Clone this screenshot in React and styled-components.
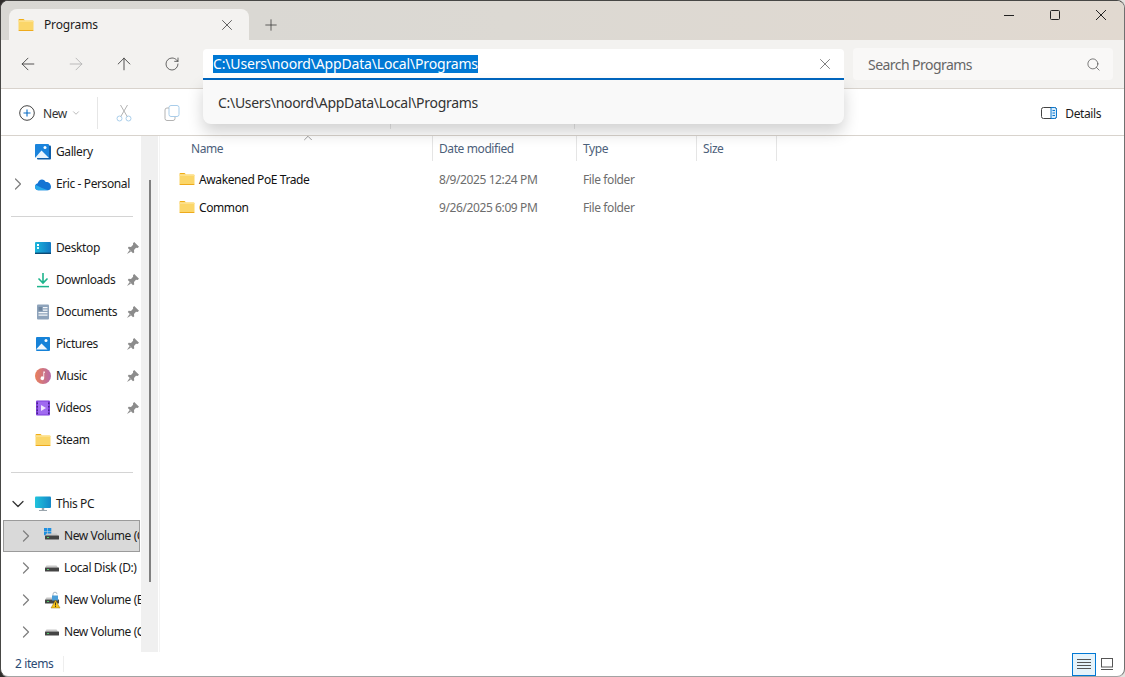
import React from 'react';
import styled, { createGlobalStyle } from 'styled-components';
import {
  ArrowLeft,
  ArrowRight,
  ArrowUp,
  RotateCw,
  X,
  Plus,
  Search,
  ChevronDown,
  ChevronRight,
  ChevronUp,
} from 'lucide-react';

const GlobalStyle = createGlobalStyle`
  html, body {
    margin: 0;
    padding: 0;
    height: 100%;
    background: linear-gradient(90deg, #2e2c2a 50%, #e4e2df 50%);
    overflow: hidden;
  }
  * {
    box-sizing: border-box;
  }
`;

const Win = styled.div`
  width: 1125px;
  height: 677px;
  display: flex;
  flex-direction: column;
  border: 1px solid #474745;
  border-right-color: #707070;
  border-bottom-color: #a3a3a3;
  border-radius: 8px;
  overflow: hidden;
  background: #fff;
  font-family: 'Noto Sans', 'Open Sans', sans-serif;
  font-size: 12px;
  letter-spacing: -0.4px;
  color: #1b1b1b;
`;

const TitleBar = styled.div`
  height: 39px;
  flex: none;
  display: flex;
  align-items: flex-end;
  padding-left: 8px;
  background: linear-gradient(90deg, #d8d7d3 0%, #dcd9d3 45%, #e1d9d0 100%);
`;

const Tab = styled.div`
  width: 240px;
  height: 31px;
  display: flex;
  align-items: center;
  padding: 0 13px 0 9px;
  background: #f3f2f0;
  border-radius: 8px 8px 0 0;
`;

const TabTitle = styled.span`
  margin-left: 10px;
  flex: 1;
  letter-spacing: -0.15px;
`;

const NewTab = styled.div`
  width: 44px;
  height: 31px;
  display: flex;
  align-items: center;
  justify-content: center;
  color: #333;
`;

const WinControls = styled.div`
  margin-left: auto;
  align-self: stretch;
  display: flex;
  padding: 0 13px 0 0;
  gap: 26px;
`;

const WinButton = styled.div`
  width: 20px;
  height: 28px;
  display: flex;
  align-items: center;
  justify-content: center;
`;

const NavBar = styled.div`
  height: 49px;
  flex: none;
  display: flex;
  align-items: center;
  padding: 0 11px 1px 3px;
  background: #f3f2f0;
  border-bottom: 1px solid #d8d3cd;
`;

const NavButton = styled.div`
  width: 48px;
  height: 32px;
  display: flex;
  align-items: center;
  justify-content: center;
  color: ${(p) => (p.$off ? '#b0b0b0' : '#333')};
`;

const AddressWrap = styled.div`
  position: relative;
  width: 641px;
  height: 31px;
  margin: 2px 0 0 7px;
`;

const AddressBox = styled.div`
  height: 31px;
  display: flex;
  align-items: center;
  justify-content: space-between;
  padding: 0 10px;
  background: #fff;
  border-radius: 4px 4px 0 0;
  border-bottom: 2px solid #0067c0;
  font-size: 14px;
`;

const AddressText = styled.span`
  background: #0078d4;
  color: #fff;
  line-height: 18px;
  letter-spacing: -0.165px;
`;

const Popup = styled.div`
  position: absolute;
  z-index: 10;
  top: 31px;
  left: 0;
  right: 0;
  height: 44px;
  display: flex;
  align-items: center;
  padding-left: 15px;
  background: #f9f9f9;
  border-radius: 0 0 8px 8px;
  box-shadow: 0 8px 16px rgba(0, 0, 0, 0.18);
  font-size: 14px;
  letter-spacing: -0.3px;
  color: #333;
`;

const SearchBox = styled.div`
  width: 260px;
  height: 32px;
  margin: 1px 0 0 9px;
  display: flex;
  align-items: center;
  justify-content: space-between;
  padding: 0 12px 0 15px;
  background: #f9f8f7;
  border-radius: 4px;
  font-size: 14px;
  letter-spacing: -0.55px;
  color: #666;
`;

const CommandBar = styled.div`
  height: 47px;
  flex: none;
  display: flex;
  align-items: center;
  padding: 2px 23px 0 0;
  background: #fff;
  border-bottom: 1px solid #d8d3cd;
`;

const CmdNew = styled.div`
  width: 96px;
  display: flex;
  align-items: center;
  padding-left: 18px;
  gap: 8px;
  color: #333;
`;

const NewChevron = styled(ChevronDown)`
  margin-left: -4px;
`;

const CmdDivider = styled.div`
  width: 1px;
  height: 32px;
  background: #e6e6e6;
  margin-left: ${(p) => p.$left || 0}px;
  margin-right: ${(p) => p.$right || 0}px;
`;

const CmdIcon = styled.div`
  width: 48px;
  height: 32px;
  display: flex;
  align-items: center;
  justify-content: center;
`;

const CmdDetails = styled.div`
  margin-left: auto;
  display: flex;
  align-items: center;
  gap: 8px;
`;

const Main = styled.div`
  flex: 1;
  min-height: 0;
  display: flex;
`;

const Sidebar = styled.div`
  width: 140px;
  flex: none;
  overflow: hidden;
  display: flex;
  flex-direction: column;
`;

const NavRow = styled.div`
  height: 32px;
  flex: none;
  display: flex;
  align-items: center;
  white-space: nowrap;
  overflow: hidden;
  padding-left: ${(p) => (p.$child ? 20 : 12)}px;
  ${(p) =>
    p.$selected &&
    `
    margin: 0 1px 0 2px;
    padding-left: 17px;
    background: #d9d9d9;
    border: 1px solid #9b9b9b;
  `}
`;

const Chev = styled.div`
  width: 9px;
  height: 12px;
  margin-right: 13px;
  display: flex;
  align-items: center;
  justify-content: center;
  flex: none;
  color: ${(p) => (p.$dark ? '#333' : '#808080')};
  svg {
    flex: none;
  }
`;

const NavIcon = styled.div`
  width: 16px;
  height: 16px;
  flex: none;
  display: flex;
  align-items: center;
  justify-content: center;
`;

const NavLabel = styled.span`
  margin-left: 5px;
  padding-bottom: 2px;
  flex: 1;
`;

const PinWrap = styled.div`
  width: 12px;
  flex: none;
  margin-right: 2px;
  display: flex;
`;

const SideDivider = styled.div`
  height: 32px;
  flex: none;
  display: flex;
  align-items: center;
  padding: 0 8px 0 10px;
  &::after {
    content: '';
    flex: 1;
    height: 1px;
    background: #d4d4d4;
  }
`;

const ScrollTrack = styled.div`
  width: 17px;
  flex: none;
  display: flex;
  justify-content: center;
  padding-top: 44px;
  background: #f0f0f0;
`;

const ScrollThumb = styled.div`
  width: 2px;
  height: 402px;
  background: #808080;
`;

const Content = styled.div`
  flex: 1;
  margin-left: 1px;
  border-left: 1px solid #f4f4f4;
  display: flex;
  flex-direction: column;
`;

const HeaderRow = styled.div`
  position: relative;
  height: 25px;
  display: flex;
  padding-left: 12px;
  margin-bottom: 4px;
`;

const SortCaret = styled.div`
  position: absolute;
  left: 141px;
  top: -5px;
  color: #777;
  display: flex;
`;

const HeaderCell = styled.div`
  width: ${(p) => p.$w}px;
  height: 25px;
  display: flex;
  align-items: center;
  padding-left: ${(p) => p.$pad || 6}px;
  padding-bottom: 1px;
  border-right: 1px solid #e5e5e5;
  color: #4c607a;
`;

const FileRow = styled.div`
  height: 28px;
  display: flex;
  align-items: center;
  padding-left: 19px;
`;

const FileName = styled.div`
  width: 260px;
  display: flex;
  align-items: center;
  gap: 4px;
  color: #111;
`;

const FileCell = styled.div`
  width: ${(p) => p.$w}px;
  color: #6d6d6d;
`;

const StatusBar = styled.div`
  height: 24px;
  flex: none;
  display: flex;
  align-items: center;
  padding: 0 9px 0 14px;
  color: #2c4a73;
`;

const StatusText = styled.span`
  padding-bottom: 2px;
`;

const StatusDivider = styled.div`
  width: 1px;
  height: 16px;
  margin-left: 10px;
  background: #eee;
`;

const ViewButtons = styled.div`
  margin-left: auto;
  display: flex;
  align-items: center;
  gap: 3px;
`;

const ViewButton = styled.div`
  width: ${(p) => (p.$active ? 24 : 16)}px;
  height: 23px;
  display: flex;
  align-items: center;
  justify-content: center;
  border: ${(p) => (p.$active ? '1px solid #0078d4' : 'none')};
  background: ${(p) => (p.$active ? '#e5f3fb' : 'transparent')};
`;

const Folder = ({ size = 16 }) => (
  <svg width={size} height={size} viewBox="0 0 16 16">
    <path d="M0.5 3a1 1 0 0 1 1-1h4l1.6 1.4H0.5z" fill="#f0ad14" />
    <path d="M0.5 3.4h14a1 1 0 0 1 1 1v8.6a1 1 0 0 1-1 1h-13a1 1 0 0 1-1-1z" fill="#fbd669" />
    <path d="M0.5 13h15a1 1 0 0 1-1 1h-13a1 1 0 0 1-1-1z" fill="#eeaa1c" />
    <path d="M0.5 3.4h14a1 1 0 0 1 1 1v0.5h-15z" fill="#fde08a" />
  </svg>
);

const Cut = () => (
  <svg width="16" height="18" viewBox="0 0 16 18" fill="none" stroke="#a9cdea" strokeWidth="1">
    <circle cx="3.5" cy="14.5" r="2.5" />
    <circle cx="12.5" cy="14.5" r="2.5" />
    <path d="M4.8 12.5 11.5 1M11.2 12.5 4.5 1" stroke="#b3b3b3" />
  </svg>
);

const CopyIcon = () => (
  <svg width="16" height="16" viewBox="0 0 16 16" fill="none">
    <rect x="5" y="0.5" width="10" height="11" rx="2" stroke="#a9cdea" />
    <path d="M5 3H3a2 2 0 0 0-2 2v8.5a2 2 0 0 0 2 2h6a2 2 0 0 0 2-2V12" stroke="#b3b3b3" />
  </svg>
);

const NewIcon = () => (
  <svg width="16" height="16" viewBox="0 0 16 16" fill="none">
    <circle cx="8" cy="8" r="7.3" stroke="#444" />
    <path d="M8 4.5v7M4.5 8h7" stroke="#0a6cc4" strokeWidth="1.1" />
  </svg>
);

const DetailsIcon = () => (
  <svg width="16" height="12" viewBox="0 0 16 12" fill="none">
    <rect x="0.5" y="0.5" width="15" height="11" rx="2" stroke="#444" />
    <path d="M10 0.5h3.5a2 2 0 0 1 2 2v7a2 2 0 0 1-2 2H10z" fill="#d9ecfb" stroke="#0a78d0" />
    <path d="M11.5 3.5h2.5M11.5 6h2.5M11.5 8.5h2.5" stroke="#0a78d0" />
  </svg>
);

const Pin = () => (
  <svg width="12" height="12" viewBox="0 0 12 12">
    <path d="M7.2 0 12 4.8 10.6 6 9 5.8 7 8l.2 2.4L6 11.2 0.8 6l.9-1.2L4 5l2.1-2.2L6 1.2z" fill="#8c8c8c" />
    <path d="M2.6 8 0 12l4-2.6z" fill="#8c8c8c" />
  </svg>
);

const GalleryIcon = () => (
  <svg width="16" height="16" viewBox="0 0 16 16">
    <rect x="2" y="1.5" width="14" height="14" rx="1" fill="#0f5ea8" />
    <rect x="0" y="0" width="14" height="14" rx="1" fill="#1b84dc" />
    <circle cx="10" cy="3.6" r="1.5" fill="#fff" />
    <path d="M0 14 6.5 6.5 14 14z" fill="#eaf5fd" />
  </svg>
);

const CloudIcon = () => (
  <svg width="16" height="16" viewBox="0 0 16 16">
    <g transform="translate(0 -1.5) scale(1 1.22)">
      <path d="M3.2 13C1.4 13 0 11.7 0 10.1c0-1.5 1.1-2.7 2.7-2.9C3.3 5.3 5 4 7 4c1.6 0 3 .8 3.7 2.1 2.7-.3 5.3 1.4 5.3 4 0 1.6-1.3 2.9-3 2.9z" fill="#1474d4" />
      <path d="M3.2 13C1.4 13 0 11.7 0 10.1c0-.6.2-1.1.5-1.6L7 11l6 2z" fill="#28a8ea" />
    </g>
  </svg>
);

const DesktopIcon = () => (
  <svg width="16" height="16" viewBox="0 0 16 16">
    <defs>
      <linearGradient id="dsk" x1="0" x2="1">
        <stop offset="0" stopColor="#1bb7dc" />
        <stop offset="1" stopColor="#1378c4" />
      </linearGradient>
    </defs>
    <rect x="0" y="2" width="16" height="12" rx="1" fill="url(#dsk)" />
    <rect x="2" y="4" width="2" height="2" fill="#fff" />
    <rect x="2" y="7" width="2" height="2" fill="#dff" />
    <rect x="0" y="12.6" width="16" height="1.4" fill="#0d4a75" />
  </svg>
);

const DownloadIcon = () => (
  <svg width="16" height="16" viewBox="0 0 16 16" fill="none" stroke="#1eb48c" strokeWidth="1.6">
    <path d="M8 1v9.5M3.5 6.5 8 11l4.5-4.5" />
    <path d="M2 14.6h12" strokeWidth="1.5" />
  </svg>
);

const DocIcon = () => (
  <svg width="16" height="16" viewBox="0 0 16 16">
    <rect x="2" y="0.5" width="12" height="15" rx="1" fill="#8ea3bb" />
    <path d="M8 3h4.5v1.2H8zM8 5.5h4.5v1.2H8zM3.5 8h9v1.2h-9zM3.5 10.5h9v1.2h-9z" fill="#f4f7fa" />
    <path d="M3.5 3H7v3.7H3.5z" fill="#6f86a0" />
  </svg>
);

const PicturesIcon = () => (
  <svg width="16" height="16" viewBox="0 0 16 16">
    <rect x="1" y="1" width="14" height="14" rx="1" fill="#1682d8" />
    <circle cx="11" cy="4.6" r="1.5" fill="#fff" />
    <path d="M1 13.4 6.5 7.5l6 5.9z" fill="#f2f8fd" />
  </svg>
);

const MusicIcon = () => (
  <svg width="16" height="16" viewBox="0 0 16 16">
    <defs>
      <linearGradient id="mus" x1="0" x2="1">
        <stop offset="0" stopColor="#e9805a" />
        <stop offset="1" stopColor="#b66aa8" />
      </linearGradient>
    </defs>
    <circle cx="8" cy="8" r="8" fill="url(#mus)" />
    <path d="M8.4 3.5h1.4v1.4H9.2v5.4a1.8 1.8 0 1 1-0.8-1.5z" fill="#fff" />
  </svg>
);

const VideoIcon = () => (
  <svg width="16" height="16" viewBox="0 0 16 16">
    <rect x="1" y="0.5" width="14" height="15" rx="1" fill="#7f3fdc" />
    <path d="M3 1.5v13h10v-13z" fill="#a06af0" />
    <path d="M6 5v6l5-3z" fill="#f0e8fd" />
    <path d="M1.7 2.5h1v1.4h-1zM1.7 6h1v1.4h-1zM1.7 9.5h1v1.4h-1zM1.7 12.5h1v1.4h-1zM13.3 2.5h1v1.4h-1zM13.3 6h1v1.4h-1zM13.3 9.5h1v1.4h-1zM13.3 12.5h1v1.4h-1z" fill="#321a60" />
  </svg>
);

const PcIcon = () => (
  <svg width="16" height="16" viewBox="0 0 16 16">
    <defs>
      <linearGradient id="pc" x1="0" x2="1">
        <stop offset="0" stopColor="#21c3dc" />
        <stop offset="1" stopColor="#1388c8" />
      </linearGradient>
    </defs>
    <rect x="0" y="0.5" width="16" height="11.5" rx="1" fill="url(#pc)" />
    <path d="M6.8 12h2.4v2H12v1H4v-1h2.8z" fill="#9aa5ad" />
  </svg>
);

const Drive = ({ system, warn }) => (
  <svg width="16" height="16" viewBox="0 0 16 16" style={{ overflow: 'visible' }}>
    {system && (
      <path d="M1 0h3.4v3.4H1zM4.9 0h3.4v3.4H4.9zM1 3.9h3.4v3.4H1zM4.9 3.9h3.4v3.4H4.9z" fill="#1e8fe0" />
    )}
    {warn && (
      <path d="M10 4V2.2a2 2 0 0 1 4 0" fill="none" stroke="#a9b8c4" strokeWidth="1" />
    )}
    <path d="M2 7.5 3.5 5.5h10L15 7.5z" fill="#c8c8c8" />
    <rect x="2" y="7.5" width="14" height="4" rx="0.5" fill="#444" />
    <rect x="4" y="9" width="2" height="1" fill="#4fd06a" />
    {warn && <rect x="9" y="3.5" width="6" height="5" fill="#4a9ed8" />}
    {warn && <path d="M12.5 8 17 16H8z" fill="#f7c31c" stroke="#7a5a00" strokeWidth="0.4" />}
    {warn && <path d="M12.1 10.5h.8v3h-.8zM12.1 14h.8v1h-.8z" fill="#222" />}
  </svg>
);

const Row = ({ icon, label, chev, open, child, selected, pin }) => (
  <NavRow $child={child} $selected={selected}>
    <Chev $dark={open}>
      {chev &&
        (open ? (
          <ChevronDown size={20} strokeWidth={1.5} />
        ) : (
          <ChevronRight size={20} strokeWidth={1.5} />
        ))}
    </Chev>
    <NavIcon>{icon}</NavIcon>
    <NavLabel>{label}</NavLabel>
    {pin && (
      <PinWrap>
        <Pin />
      </PinWrap>
    )}
  </NavRow>
);

const files = [
  { name: 'Awakened PoE Trade', date: '8/9/2025 12:24 PM' },
  { name: 'Common', date: '9/26/2025 6:09 PM' },
];

export default function App() {
  return (
    <>
      <GlobalStyle />
      <Win>
        <TitleBar>
          <Tab>
            <Folder />
            <TabTitle>Programs</TabTitle>
            <X size={18} strokeWidth={1} color="#333" />
          </Tab>
          <NewTab>
            <Plus size={18} strokeWidth={1} />
          </NewTab>
          <WinControls>
            <WinButton>
              <svg width="10" height="10" viewBox="0 0 10 10">
                <path d="M0 5.5h10" stroke="#222" />
              </svg>
            </WinButton>
            <WinButton>
              <svg width="10" height="10" viewBox="0 0 10 10" fill="none">
                <rect x="0.5" y="0.5" width="9" height="9" rx="1" stroke="#222" />
              </svg>
            </WinButton>
            <WinButton>
              <svg width="10" height="10" viewBox="0 0 10 10">
                <path d="M0 0l10 10M10 0 0 10" stroke="#222" />
              </svg>
            </WinButton>
          </WinControls>
        </TitleBar>

        <NavBar>
          <NavButton>
            <ArrowLeft size={20} strokeWidth={1} />
          </NavButton>
          <NavButton $off>
            <ArrowRight size={20} strokeWidth={1} />
          </NavButton>
          <NavButton>
            <ArrowUp size={20} strokeWidth={1} />
          </NavButton>
          <NavButton>
            <RotateCw size={16} strokeWidth={1.1} />
          </NavButton>
          <AddressWrap>
            <AddressBox>
              <AddressText>C:\Users\noord\AppData\Local\Programs</AddressText>
              <X size={18} strokeWidth={1} color="#555" />
            </AddressBox>
            <Popup>C:\Users\noord\AppData\Local\Programs</Popup>
          </AddressWrap>
          <SearchBox>
            Search Programs
            <Search size={15} strokeWidth={1.1} color="#444" />
          </SearchBox>
        </NavBar>

        <CommandBar>
          <CmdNew>
            <NewIcon />
            New
            <NewChevron size={10} strokeWidth={1.2} color="#777" />
          </CmdNew>
          <CmdDivider $right={2} />
          <CmdIcon>
            <Cut />
          </CmdIcon>
          <CmdIcon>
            <CopyIcon />
          </CmdIcon>
          <CmdDivider $left={194} />
          <CmdDivider $left={183} />
          <CmdDetails>
            <DetailsIcon />
            Details
          </CmdDetails>
        </CommandBar>

        <Main>
          <Sidebar>
            <Row icon={<GalleryIcon />} label="Gallery" />
            <Row icon={<CloudIcon />} label="Eric - Personal" chev />
            <SideDivider />
            <Row icon={<DesktopIcon />} label="Desktop" pin />
            <Row icon={<DownloadIcon />} label="Downloads" pin />
            <Row icon={<DocIcon />} label="Documents" pin />
            <Row icon={<PicturesIcon />} label="Pictures" pin />
            <Row icon={<MusicIcon />} label="Music" pin />
            <Row icon={<VideoIcon />} label="Videos" pin />
            <Row icon={<Folder />} label="Steam" />
            <SideDivider />
            <Row icon={<PcIcon />} label="This PC" chev open />
            <Row icon={<Drive system />} label="New Volume (C:)" chev child selected />
            <Row icon={<Drive />} label="Local Disk (D:)" chev child />
            <Row icon={<Drive warn />} label="New Volume (E:)" chev child />
            <Row icon={<Drive />} label="New Volume (G:)" chev child />
          </Sidebar>
          <ScrollTrack>
            <ScrollThumb />
          </ScrollTrack>
          <Content>
            <HeaderRow>
              <SortCaret>
                <ChevronUp size={14} strokeWidth={1.2} />
              </SortCaret>
              <HeaderCell $w={261} $pad={19}>
                Name
              </HeaderCell>
              <HeaderCell $w={144}>Date modified</HeaderCell>
              <HeaderCell $w={120}>Type</HeaderCell>
              <HeaderCell $w={80}>Size</HeaderCell>
            </HeaderRow>
            {files.map((f) => (
              <FileRow key={f.name}>
                <FileName>
                  <Folder />
                  {f.name}
                </FileName>
                <FileCell $w={144}>{f.date}</FileCell>
                <FileCell $w={120}>File folder</FileCell>
              </FileRow>
            ))}
          </Content>
        </Main>

        <StatusBar>
          <StatusText>2 items</StatusText>
          <StatusDivider />
          <ViewButtons>
            <ViewButton $active>
              <svg width="14" height="12" viewBox="0 0 14 12">
                <path d="M0 1.5h14M0 4.5h14M0 7.5h14M0 10.5h14" stroke="#555" />
              </svg>
            </ViewButton>
            <ViewButton>
              <svg width="14" height="14" viewBox="0 0 14 14" fill="none">
                <rect x="1.5" y="1.5" width="11" height="8.5" stroke="#555" />
                <path d="M1 12.5h12" stroke="#555" />
              </svg>
            </ViewButton>
          </ViewButtons>
        </StatusBar>
      </Win>
    </>
  );
}
